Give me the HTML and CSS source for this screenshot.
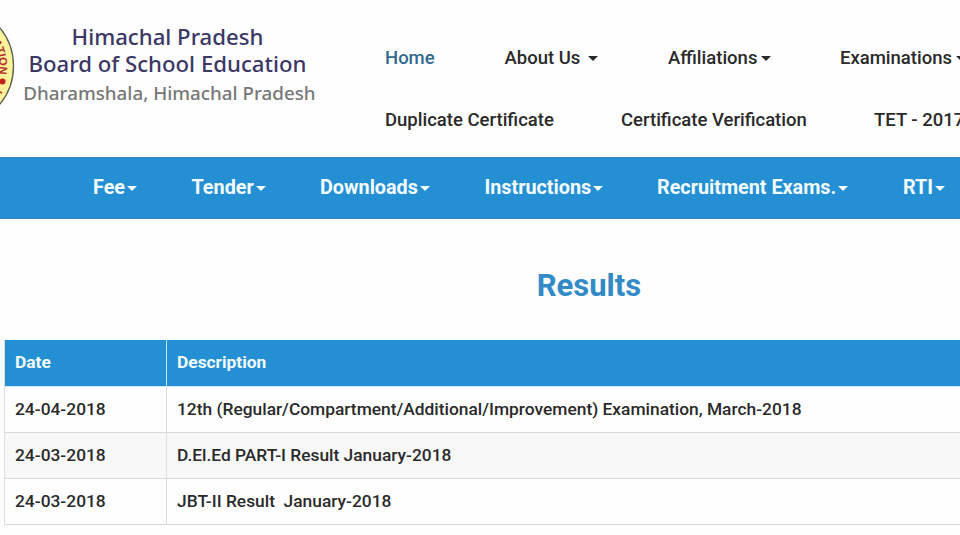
FILE: index.html
```
<!DOCTYPE html>
<html lang="en">
<head>
<meta charset="utf-8">
<title>Himachal Pradesh Board of School Education</title>
<link rel="stylesheet" href="styles.css">
</head>
<body>
<header class="header">
  <svg class="seal" width="16" height="130" viewBox="0 0 16 130" aria-hidden="true">
    <circle cx="-46.5" cy="66" r="60" fill="#fbf29a" stroke="#56604a" stroke-width="1.3"/>
    <path id="rim" d="M-46.5 20 A46 46 0 0 1 -1.2 74" fill="none"/>
    <text class="seal-text" text-anchor="end"><textPath href="#rim" startOffset="100%">ATION</textPath></text>
    <circle cx="2.5" cy="81.500" r="3" fill="#c41f1a"/>
    <path d="M0 92 L2 93" stroke="#c41f1a" stroke-width="1.500"/>
  </svg>
  <div class="brand">
    <div class="name name-top">Himachal Pradesh</div>
    <div class="name name-main">Board of School Education</div>
    <div class="place">Dharamshala, Himachal Pradesh</div>
  </div>
  <nav class="top-nav">
    <div class="nav-row">
      <a class="home">Home</a>
      <a class="about">About Us<i class="caret spaced"></i></a>
      <a class="affil">Affiliations<i class="caret"></i></a>
      <a class="exam">Examinations<i class="caret"></i></a>
    </div>
    <div class="nav-row">
      <a class="duplicate">Duplicate Certificate</a>
      <a class="verify">Certificate Verification</a>
      <a class="tet">TET - 2017</a>
    </div>
  </nav>
</header>
<nav class="bar">
  <a class="fee">Fee<i class="caret"></i></a>
  <a class="tender">Tender<i class="caret"></i></a>
  <a class="downloads">Downloads<i class="caret"></i></a>
  <a class="instructions">Instructions<i class="caret"></i></a>
  <a class="recruitment">Recruitment Exams.<i class="caret"></i></a>
  <a class="rti">RTI<i class="caret"></i></a>
</nav>
<main>
  <h1>Results</h1>
  <table>
    <thead><tr><th class="date">Date</th><th>Description</th></tr></thead>
    <tbody>
      <tr><td>24-04-2018</td><td>12th (Regular/Compartment/Additional/Improvement) Examination, March-2018</td></tr>
      <tr><td>24-03-2018</td><td>D.El.Ed PART-I Result January-2018</td></tr>
      <tr><td>24-03-2018</td><td>JBT-II Result&nbsp; January-2018</td></tr>
    </tbody>
  </table>
</main>
</body>
</html>
```
FILE: styles.css
```
* { box-sizing: border-box; }
body {
  margin: 0;
  width: 960px;
  height: 535px;
  overflow: hidden;
  background: #fefefe;
  color: #2a2a2a;
  font-family: Roboto, sans-serif;
}
.header { display: flex; height: 157px; overflow: hidden; }
.seal { flex: none; width: 16px; height: 130px; }
.seal-text { font: bold 11px "Liberation Sans", sans-serif; fill: #b5312a; }
.brand {
  flex: none;
  width: 307px;
  padding-top: 23px;
  text-align: center;
  white-space: nowrap;
  font-family: "Noto Sans", sans-serif;
}
.name { height: 27px; margin-right: 4px; line-height: 27px; font-size: 22.2px; font-weight: 500; color: #3b3866; }
.place { height: 32px; line-height: 33px; font-size: 18.8px; font-weight: 500; color: #777; }
.top-nav { flex: none; width: 637px; padding: 28px 0 0 62px; }
.nav-row { display: flex; height: 61.5px; line-height: 61.5px; }
.nav-row a { flex: none; white-space: nowrap; font-size: 18.5px; font-weight: 500; }
.nav-row .home { width: 119.5px; color: #34698f; }
.about { width: 163.5px; }
.affil { width: 172px; }
.duplicate { width: 236px; }
.verify { width: 253px; }
.caret {
  display: inline-block;
  margin-left: 4px;
  vertical-align: 3px;
  border: 5px solid transparent;
  border-top-color: currentColor;
  border-bottom: 0;
}
.caret.spaced { margin-left: 8px; }
.bar {
  display: flex;
  height: 62px;
  padding-left: 93px;
  line-height: 60px;
  background: #258fd3;
  border-top: 1px solid #3787bb;
  border-bottom: 1px solid #3787bb;
  color: #f2fcff;
  font-size: 19.8px;
  font-weight: 700;
}
.bar a { flex: none; white-space: nowrap; }
.fee { width: 98.5px; }
.tender { width: 128.5px; }
.downloads { width: 164.5px; }
.instructions { width: 172.5px; }
.recruitment { width: 246px; }
.bar .caret { margin-left: 2px; }
h1 {
  margin: 47px 0 0;
  padding-left: 218px;
  height: 74px;
  line-height: 40px;
  text-align: center;
  font-size: 31px;
  font-weight: 700;
  color: #328bc7;
}
table {
  width: 1000px;
  margin-left: 4px;
  border-collapse: separate;
  border-spacing: 0;
  border-left: 1px solid #ddd;
  table-layout: fixed;
  font-size: 17.36px;
}
th, td {
  height: 46px;
  padding: 0 10px 2px;
  text-align: left;
  white-space: nowrap;
  border-right: 1px solid #ddd;
  border-bottom: 1px solid #d8d8d8;
}
th { height: 47px; padding-bottom: 3px; background: #258fd3; color: #f2fcff; font-weight: 700; border-right-color: #c8e3f4; border-bottom-color: #cfe7f7; }
td { font-weight: 500; }
.date { width: 162px; }
tbody tr:nth-child(even) { background: #f8f8f8; }
```
